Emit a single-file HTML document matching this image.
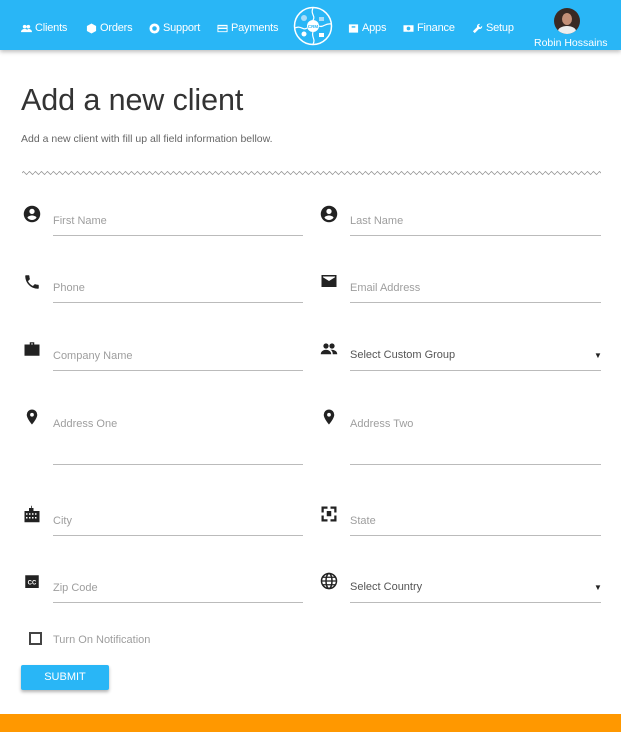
<!DOCTYPE html>
<html><head><meta charset="utf-8"><style>
*{margin:0;padding:0;box-sizing:border-box}
body{width:621px;height:732px;overflow:hidden;background:#fff;font-family:"Liberation Sans",sans-serif;position:relative}
.hdr{position:absolute;left:0;top:0;width:621px;height:50px;background:#29b6f6;box-shadow:0 2px 4px rgba(0,0,0,.25)}
.nav{position:absolute;top:22px;color:#fff;font-size:11px;display:flex;align-items:center;gap:3px;letter-spacing:-.2px}
.nav svg{width:11px;height:11px;fill:#fff}
.t{position:absolute;left:21px;top:83px;font-size:30.5px;font-weight:300;color:#333;letter-spacing:-.1px}
.st{position:absolute;left:21px;top:133px;font-size:10.5px;color:#666}
.f{position:absolute;border-bottom:1px solid #bbb;height:1px}
.l{position:absolute;font-size:11px;color:#9e9e9e;margin-top:1px}
.ic{position:absolute;width:18px;height:18px;fill:#222}
.arr{position:absolute;font-size:8px;color:#222}
.btn{position:absolute;left:21px;top:665px;width:88px;height:25px;background:#29b6f6;color:#fff;font-size:11px;text-align:center;line-height:25px;box-shadow:0 2px 3px rgba(0,0,0,.3);border-radius:2px}
.ob{position:absolute;left:0;top:714px;width:621px;height:18px;background:#ff9800}
</style></head><body>
<div class="hdr">
<div class="nav" style="left:21px"><svg viewBox="0 0 24 24"><circle cx="8" cy="8" r="4"/><circle cx="16" cy="8" r="4"/><path d="M0 20c0-5 4-7 8-7s8 2 8 7zM12 20c0-4 2-6 4-7 4 0 8 2 8 7z"/></svg>Clients</div>
<div class="nav" style="left:86px"><svg viewBox="0 0 24 24"><path d="M12 1l10 5.5v11L12 23 2 17.5v-11z"/></svg>Orders</div>
<div class="nav" style="left:149px"><svg viewBox="0 0 24 24"><path d="M12 1a11 11 0 1 0 0 22 11 11 0 0 0 0-22zm0 6a5 5 0 1 1 0 10 5 5 0 0 1 0-10z"/></svg>Support</div>
<div class="nav" style="left:217px"><svg viewBox="0 0 24 24"><path d="M1 4h22v16H1zM3 7v3h18V7zM3 13v5h18v-5z"/></svg>Payments</div>
<svg style="position:absolute;left:293px;top:6px" width="40" height="40" viewBox="0 0 40 40"><circle cx="20" cy="20" r="18.5" fill="#29b6f6" stroke="#fff" stroke-width="1.5"/><path d="M20 2c-3 6 3 8 0 12M2 22c6-3 8 3 12 0M26 20c4 2 6-3 12-2M20 26c-2 5 3 7 0 12" stroke="#fff" fill="none" stroke-width="1.2"/><circle cx="20" cy="20" r="6" fill="#fff"/><text x="20" y="22" font-size="4.5" fill="#29b6f6" text-anchor="middle" font-family="Liberation Sans" font-weight="bold">CRM</text><circle cx="11" cy="12" r="3" fill="#a8dcf8"/><rect x="26" y="11" width="5" height="4" fill="#a8dcf8"/><circle cx="11" cy="28" r="2.5" fill="#fff"/><rect x="26" y="27" width="5" height="4" fill="#fff"/></svg>
<div class="nav" style="left:348px"><svg viewBox="0 0 24 24"><path d="M2 3h20v18H2zM8 7v3h8V7z"/></svg>Apps</div>
<div class="nav" style="left:403px"><svg viewBox="0 0 24 24"><path d="M1 5h22v14H1zm11 3a4 4 0 1 0 0 8 4 4 0 0 0 0-8z"/></svg>Finance</div>
<div class="nav" style="left:472px"><svg viewBox="0 0 24 24"><path d="M22 6l-4 4-4-4 4-4c-4-1-8 2-7 7L2 18l4 4 9-9c5 1 8-3 7-7z"/></svg>Setup</div>
<div style="position:absolute;left:554px;top:8px;width:26px;height:26px;border-radius:50%;background:#3a2a24;overflow:hidden"><div style="position:absolute;left:8px;top:5px;width:10px;height:12px;border-radius:50%;background:#c49078"></div><div style="position:absolute;left:4px;top:18px;width:18px;height:10px;border-radius:50%;background:#eee"></div></div>
<div style="position:absolute;left:534px;top:37px;color:#fff;font-size:10.5px">Robin Hossains</div>
</div>
<div class="t">Add a new client</div>
<div class="st">Add a new client with fill up all field information bellow.</div>
<svg style="position:absolute;left:22px;top:170px" width="579" height="6"><pattern id="w" width="6" height="6" patternUnits="userSpaceOnUse"><path d="M0 3 L1.5 1.5 L4.5 4.5 L6 3" stroke="#999" fill="none" stroke-width=".8"/></pattern><rect width="579" height="6" fill="url(#w)"/></svg>

<svg class="ic" style="left:23px;top:205px" viewBox="0 0 24 24"><path d="M12 1a11 11 0 1 0 0 22 11 11 0 0 0 0-22zm0 4a3.5 3.5 0 1 1 0 7 3.5 3.5 0 0 1 0-7zm0 15a8 8 0 0 1-6-3c0-2 4-3 6-3s6 1 6 3a8 8 0 0 1-6 3z"/></svg>
<div class="l" style="left:53px;top:214px">First Name</div><div class="f" style="left:53px;top:235px;width:250px"></div>
<svg class="ic" style="left:320px;top:205px" viewBox="0 0 24 24"><path d="M12 1a11 11 0 1 0 0 22 11 11 0 0 0 0-22zm0 4a3.5 3.5 0 1 1 0 7 3.5 3.5 0 0 1 0-7zm0 15a8 8 0 0 1-6-3c0-2 4-3 6-3s6 1 6 3a8 8 0 0 1-6 3z"/></svg>
<div class="l" style="left:350px;top:214px">Last Name</div><div class="f" style="left:350px;top:235px;width:251px"></div>
<svg class="ic" style="left:23px;top:273px" viewBox="0 0 24 24"><path d="M6.6 10.8c1.4 2.8 3.8 5.1 6.6 6.6l2.2-2.2c.3-.3.7-.4 1-.2 1.1.4 2.3.6 3.6.6.6 0 1 .4 1 1V20c0 .6-.4 1-1 1C10.6 21 3 13.4 3 4c0-.6.4-1 1-1h3.5c.6 0 1 .4 1 1 0 1.3.2 2.5.6 3.6.1.3 0 .7-.2 1z"/></svg>
<div class="l" style="left:53px;top:281px">Phone</div><div class="f" style="left:53px;top:302px;width:250px"></div>
<svg class="ic" style="left:320px;top:272px" viewBox="0 0 24 24"><path d="M2 4h20v16H2zm2 2v1l8 5 8-5V6z"/></svg>
<div class="l" style="left:350px;top:281px">Email Address</div><div class="f" style="left:350px;top:302px;width:251px"></div>
<svg class="ic" style="left:23px;top:340px" viewBox="0 0 24 24"><path d="M9 3h6v3h7v15H2V6h7zm2 1.5v1.5h2V4.5z"/></svg>
<div class="l" style="left:53px;top:349px">Company Name</div><div class="f" style="left:53px;top:370px;width:250px"></div>
<svg class="ic" style="left:320px;top:340px" viewBox="0 0 24 24"><circle cx="8" cy="8" r="3.5"/><circle cx="16" cy="8" r="3.5"/><path d="M1 19c0-4 4-6 7-6s7 2 7 6zM14 13c4 0 9 1 9 6h-6c0-3-1-5-3-6z"/></svg>
<div class="l" style="left:350px;top:348px;color:#555">Select Custom Group</div><div class="arr" style="left:594px;top:351px">▼</div><div class="f" style="left:350px;top:370px;width:251px"></div>
<svg class="ic" style="left:23px;top:408px" viewBox="0 0 24 24"><path d="M12 2a7 7 0 0 0-7 7c0 5 7 13 7 13s7-8 7-13a7 7 0 0 0-7-7zm0 9.5a2.5 2.5 0 1 1 0-5 2.5 2.5 0 0 1 0 5z"/></svg>
<div class="l" style="left:53px;top:417px">Address One</div><div class="f" style="left:53px;top:464px;width:250px"></div>
<svg class="ic" style="left:320px;top:408px" viewBox="0 0 24 24"><path d="M12 2a7 7 0 0 0-7 7c0 5 7 13 7 13s7-8 7-13a7 7 0 0 0-7-7zm0 9.5a2.5 2.5 0 1 1 0-5 2.5 2.5 0 0 1 0 5z"/></svg>
<div class="l" style="left:350px;top:417px">Address Two</div><div class="f" style="left:350px;top:464px;width:251px"></div>
<svg class="ic" style="left:23px;top:505px" viewBox="0 0 24 24"><path d="M2 8h6V4h3V1h1v3h2v4h8v15H2zm2 3v2h2v-2zm4 0v2h2v-2zm4 0v2h2v-2zm4 0v2h2v-2zM4 16v2h2v-2zm4 0v2h2v-2zm4 0v2h2v-2zm4 0v2h2v-2z"/></svg>
<div class="l" style="left:53px;top:514px">City</div><div class="f" style="left:53px;top:535px;width:250px"></div>
<svg class="ic" style="left:320px;top:505px" viewBox="0 0 24 24"><path d="M2 2h8v3H5v5H2zM14 2h8v8h-3V5h-5zM2 14h3v5h5v3H2zM19 14h3v8h-8v-3h5z"/><path d="M9 8h6v7H9z"/></svg>
<div class="l" style="left:350px;top:514px">State</div><div class="f" style="left:350px;top:535px;width:251px"></div>
<svg class="ic" style="left:23px;top:573px" viewBox="0 0 24 24"><path d="M3 3h18v17H3z"/><text x="12" y="15" font-size="8" fill="#fff" text-anchor="middle" font-family="Liberation Sans" font-weight="bold">CC</text></svg>
<div class="l" style="left:53px;top:581px">Zip Code</div><div class="f" style="left:53px;top:602px;width:250px"></div>
<svg class="ic" style="left:320px;top:572px" viewBox="0 0 24 24"><circle cx="12" cy="12" r="10" fill="none" stroke="#222" stroke-width="2"/><ellipse cx="12" cy="12" rx="4" ry="10" fill="none" stroke="#222" stroke-width="2"/><path d="M2 12h20M4 7h16M4 17h16" stroke="#222" stroke-width="1.6"/></svg>
<div class="l" style="left:350px;top:580px;color:#555">Select Country</div><div class="arr" style="left:594px;top:583px">▼</div><div class="f" style="left:350px;top:602px;width:251px"></div>

<div style="position:absolute;left:29px;top:632px;width:13px;height:13px;border:2px solid #444"></div>
<div class="l" style="left:53px;top:633px">Turn On Notification</div>
<div class="btn">SUBMIT</div>
<div class="ob"></div>
</body></html>
